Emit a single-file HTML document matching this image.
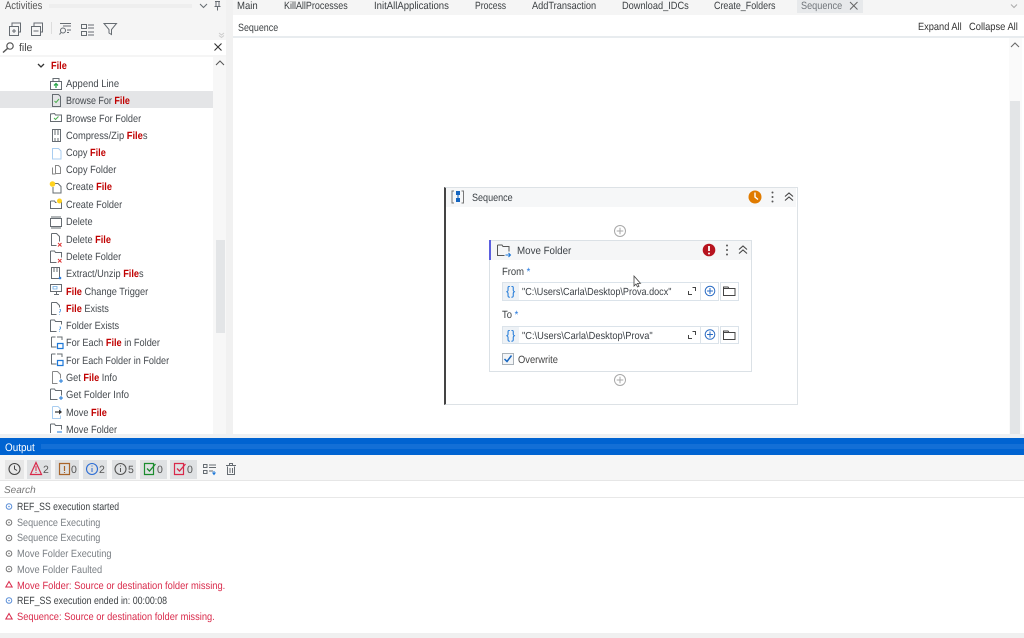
<!DOCTYPE html>
<html><head><meta charset="utf-8">
<style>
html,body{margin:0;padding:0;width:1024px;height:638px;overflow:hidden;background:#f5f5f5;font-family:"Liberation Sans",sans-serif;font-size:11px;color:#3c4043;text-rendering:geometricPrecision}
.a{position:absolute}
.t{position:absolute;white-space:nowrap;line-height:14px;height:14px;transform:scaleX(var(--x,1));transform-origin:0 0}
b.r{color:#c00000;font-weight:700}
svg{position:absolute;overflow:visible;fill:none}
.s{stroke:#666c72;stroke-width:1}
.row{position:absolute;left:66px;white-space:nowrap;line-height:14px;color:#44494e;font-size:10.5px;transform:scaleX(var(--x,.875));transform-origin:0 0}
.log{position:absolute;left:17px;white-space:nowrap;line-height:14px;font-size:10.5px;transform:scaleX(var(--x,.88));transform-origin:0 0}
.g{color:#7a7f84}.d{color:#3c4043}.e{color:#d9294a}
.btn{position:absolute;top:460px;height:19px;background:#dfe1e3}
.n{position:absolute;top:463px;font-size:10.5px;line-height:14px;color:#555}
.tab{font-size:10.5px;top:-1px}
</style></head><body>

<!-- left panel -->
<div class="a" style="left:0;top:0;width:226px;height:434px;background:#f5f5f5"></div>
<div class="t" style="left:5px;top:-1px;color:#555;--x:.86">Activities</div>
<div class="a" style="left:49px;top:4px;width:143px;height:4px;background-image:radial-gradient(#d8d8d8 0.6px,transparent 0.7px);background-size:2px 2px"></div>
<svg style="left:0;top:0" width="226" height="40"><path class="s" d="M200 4l3.500 3.500L207 4M215 1.500h5M216 1.500v5M219 1.500v5M214.500 6.500h6M217.500 6.500v4"/>
<path class="s" d="M9.500 26.500h9v9h-9zM12 26v-3h8.500v9H19M12 31h4M14 29v4"/><path class="s" d="M31.500 26.500h9v9h-9zM34 26v-3h8.500v9H41M33.500 31h5"/><path d="M51.500 22v12" stroke="#ddd"/>
<path class="s" d="M60 23.500h11M63 26h8M67 30h4M67 32.500h2"/><circle class="s" cx="63" cy="30.500" r="2.500"/><path class="s" d="M61 32.500l-1.500 2"/>
<path class="s" d="M81.500 24.500h5v4h-5zM81.500 31.500h5v4h-5zM88 25h6M88 28h6M88 32h6M88 35h6"/>
<path class="s" d="M104 23.500h12.500l-5 6v5l-2.500-1.500v-3.500z"/><path d="M219 33l2.500 2 2.500-2M219 35.500l2.500 2 2.500-2" stroke="#ccc"/></svg>
<div class="a" style="left:0;top:40px;width:226px;height:15px;background:#fff"></div>
<svg style="left:0;top:40px" width="226" height="16"><circle cx="10" cy="6" r="3.200" stroke="#555" stroke-width="1.200"/><path d="M7.500 8.500L3 12.500" stroke="#555" stroke-width="1.500"/><path d="M214.500 3.500l7 7M221.500 3.500l-7 7" stroke="#333" stroke-width="1.100"/></svg>
<div class="t" style="left:19px;top:41px;color:#444;--x:.95">file</div>
<div class="a" style="left:0;top:57px;width:213px;height:377px;background:#fff"></div>
<div class="a" style="left:213px;top:57px;width:13px;height:377px;background:#f7f7f7"></div>
<div class="a" style="left:216px;top:240px;width:9px;height:93px;background:#e3e5e7"></div>
<svg style="left:213px;top:57px" width="13" height="12"><path d="M3 8l4-4 4 4" stroke="#555"/></svg>
<svg style="left:37px;top:62px" width="8" height="8"><path d="M1 2l3 3 3-3" stroke="#333" stroke-width="1.300"/></svg>
<div class="t" style="left:51px;top:59px;font-size:10.5px;--x:.875"><b class="r">File</b></div>
<div class="a" style="left:0;top:91px;width:213px;height:17px;background:#e4e5e7"></div>

<div class="row" style="top:77px;--x:.9">Append Line</div>
<div class="row" style="top:94px;--x:.855">Browse For <b class="r">File</b></div>
<div class="row" style="top:112px;--x:.87">Browse For Folder</div>
<div class="row" style="top:129px;--x:.89">Compress/Zip <b class="r">File</b>s</div>
<div class="row" style="top:146px">Copy <b class="r">File</b></div>
<div class="row" style="top:163px;--x:.88">Copy Folder</div>
<div class="row" style="top:180px">Create <b class="r">File</b></div>
<div class="row" style="top:198px">Create Folder</div>
<div class="row" style="top:215px">Delete</div>
<div class="row" style="top:233px">Delete <b class="r">File</b></div>
<div class="row" style="top:250px">Delete Folder</div>
<div class="row" style="top:267px">Extract/Unzip <b class="r">File</b>s</div>
<div class="row" style="top:285px;--x:.88"><b class="r">File</b> Change Trigger</div>
<div class="row" style="top:302px"><b class="r">File</b> Exists</div>
<div class="row" style="top:319px">Folder Exists</div>
<div class="row" style="top:336px">For Each <b class="r">File</b> in Folder</div>
<div class="row" style="top:354px;--x:.866">For Each Folder in Folder</div>
<div class="row" style="top:371px">Get <b class="r">File</b> Info</div>
<div class="row" style="top:388px;--x:.9">Get Folder Info</div>
<div class="row" style="top:406px">Move <b class="r">File</b></div>
<div class="row" style="top:423px">Move Folder</div>

<svg style="left:0;top:0" width="226" height="436">
<path class="s" d="M50.500 81.500h11v8h-11zM53 81v-2.500h6V81"/><path d="M56 88v-4M54 85.500l2-2 2 2" stroke="#2aa84a" stroke-width="1.300"/>
<path class="s" d="M52.500 94.500h6l2 2v10h-8z"/><path d="M54.500 101l1.500 1.500 3-3.500" stroke="#4caf50"/>
<path class="s" d="M50.500 114v7.500h11V115h-6l-1-1.500z"/><path d="M54 118l1.500 1.500 3-3" stroke="#4caf50"/>
<path class="s" d="M52.500 129.500h8v12h-8zM55 130v5M58 130v5M55 138v3M58 138v3"/>
<path d="M52.500 148.500h6l2.500 2.500v8h-8.500z" stroke="#a9cdf0"/>
<path d="M55.500 165.500h3l2 2v6h-5zM52.500 167.500v6.500h3" stroke="#888"/>
<path class="s" d="M55 183.500h3l3 3v6.500h-8v-6"/><circle cx="52.500" cy="184" r="2.800" fill="#ffd21f"/>
<path class="s" d="M50.500 201v7.500h11V202h-2M50.500 201h4l1 1.500h1"/><circle cx="59.500" cy="201" r="2.500" fill="#ffd21f"/>
<path class="s" d="M50.500 218.500h11v8h-11zM51 217h10M51 228h10"/>
<path class="s" d="M51.500 233.500h5l3 3v5M51.500 233.500v12h5"/><path d="M58 243l3.500 3.500M61.500 243L58 246.500" stroke="#d33" stroke-width="1"/>
<path class="s" d="M50.500 251v11.500h6M50.500 251h4l1 1.500h6v5"/><path d="M58 259l3.500 3.500M61.500 259L58 262.500" stroke="#d33"/>
<path class="s" d="M51.500 267.500h8v11h-8zM54 268v4M57 268v4"/><circle cx="60" cy="278" r="1.300" fill="#2b7de0"/>
<path class="s" d="M50.500 284.500h11v7h-11zM54 294.500h5M56.500 291.500v3"/><path d="M53 286.500h4v2.500h-4z" stroke="#6aa8e0" stroke-width=".8"/>
<path class="s" d="M51.500 302.500h5l3 3v2M51.500 302.500v12h5"/><path d="M59.500 309.500h1v1.500l-.8 .8v1M59.500 314v.6" stroke="#3d8fe0" stroke-width=".8"/>
<path class="s" d="M50.500 320v11.500h6M50.500 320h4l1 1.500h6v3"/><path d="M59.500 327h1v1.500l-.8 .8v1M59.500 331v.6" stroke="#3d8fe0" stroke-width=".8"/>
<path class="s" d="M51.500 337v10h5M51.500 337h4M57 337h5v3"/><path d="M57.500 343.500h5.500v5h-5.500zM57.500 343.500h3" stroke="#1e78d8" stroke-width="1.200"/>
<path class="s" d="M51.500 354v10h5M51.500 354h4M57 354h5v3"/><path d="M57.500 360.500h5.500v5h-5.500z" stroke="#1e78d8" stroke-width="1.200"/>
<path d="M52.500 371.500h5l3 3v4M52.500 371.500v12h5" stroke="#888"/><path d="M59 381h4M61 379v4" stroke="#1e78d8"/>
<path class="s" d="M50.500 389v10.500h7M50.500 389h4l1 1.500h6v5"/><path d="M59 398h4M61 396v4" stroke="#1e78d8"/>
<path d="M52.500 406.500h5.500l2.500 2.500v2M52.500 406.500v12h8v-3" stroke="#a9cdf0"/><path d="M55 412h6" stroke="#333" stroke-width="1.200"/><path d="M59 409.500l3 2.500-3 2.500z" fill="#333"/>
<path class="s" d="M50.500 424v9M50.500 424h4l1 1.500h6v4"/><path d="M57 432h5" stroke="#1e78d8"/>
</svg>

<div class="a" style="left:226px;top:0;width:7px;height:434px;background:#f1f1f1"></div>

<!-- tabs -->
<div class="a" style="left:233px;top:0;width:791px;height:13px;background:#f5f5f5"></div>
<div class="a" style="left:797px;top:0;width:66px;height:13px;background:#e7e9eb"></div>
<div class="t tab" style="left:237px;--x:.91">Main</div>
<div class="t tab" style="left:284px;--x:.853">KillAllProcesses</div>
<div class="t tab" style="left:374px;--x:.91">InitAllApplications</div>
<div class="t tab" style="left:475px;--x:.82">Process</div>
<div class="t tab" style="left:532px;--x:.877">AddTransaction</div>
<div class="t tab" style="left:622px;--x:.88">Download_IDCs</div>
<div class="t tab" style="left:714px;--x:.85">Create_Folders</div>
<div class="t tab" style="left:801px;color:#70757a;--x:.87">Sequence</div>
<svg style="left:849px;top:1px" width="10" height="10"><path d="M1 1l7.500 7.500M8.500 1L1 8.500" stroke="#666"/></svg>
<svg style="left:1010px;top:3px" width="10" height="8"><path d="M1 1.500l3 3 3-3" stroke="#aaa"/></svg>
<div class="a" style="left:233px;top:15px;width:791px;height:21px;background:#fff"></div>
<div class="t" style="left:238px;top:21px;font-size:10.5px;--x:.85">Sequence</div>
<div class="t" style="left:918px;top:20px;font-size:10.5px;color:#333;--x:.88">Expand All</div>
<div class="t" style="left:969px;top:20px;font-size:10.5px;color:#333;--x:.89">Collapse All</div>
<div class="a" style="left:233px;top:36px;width:791px;height:2px;background:#e8ecef"></div>
<div class="a" style="left:233px;top:38px;width:791px;height:396px;background:#fff"></div>
<div class="a" style="left:1009px;top:38px;width:13px;height:396px;background:#fafafa"></div>
<div class="a" style="left:1010px;top:101px;width:10px;height:333px;background:#e3e5e7"></div>
<svg style="left:1010px;top:41px" width="10" height="8"><path d="M1 6l4-4 4 4" stroke="#666"/></svg>

<!-- sequence box -->
<div class="a" style="left:444px;top:187px;width:351px;height:216px;border:1px solid #dde2e6;border-left:2px solid #444;background:#fff"></div>
<div class="a" style="left:446px;top:188px;width:350px;height:19px;background:#f6f7f8"></div>
<svg style="left:450px;top:189px" width="16" height="16"><path d="M4 2H2v12h2M11.500 2h2v12h-2" stroke="#777"/><path d="M6 2h4v4H6zM6 9h4v4H6z" fill="#1565c0"/><path d="M8 6v3" stroke="#1565c0"/></svg>
<div class="t" style="left:472px;top:191px;font-size:10.5px;color:#3a3f44;--x:.86">Sequence</div>
<svg style="left:748px;top:190px" width="44" height="15"><circle cx="7" cy="7" r="6.500" fill="#e07b00"/><path d="M7 2.500V7l3 2.500" stroke="#fff" stroke-width="1.400"/><circle cx="24.500" cy="2.500" r="1" fill="#555"/><circle cx="24.500" cy="7" r="1" fill="#555"/><circle cx="24.500" cy="11.500" r="1" fill="#555"/><path d="M37 6.500l4-3.500 4 3.500M37 10.500l4-3.500 4 3.500" stroke="#444" stroke-width="1.100"/></svg>
<svg style="left:613px;top:224px" width="14" height="14"><circle cx="7" cy="7" r="5.500" stroke="#a8a8a8"/><path d="M7 3.700v6.600M3.700 7h6.600" stroke="#a8a8a8"/></svg>
<svg style="left:613px;top:373px" width="14" height="14"><circle cx="7" cy="7" r="5.500" stroke="#a8a8a8"/><path d="M7 3.700v6.600M3.700 7h6.600" stroke="#a8a8a8"/></svg>

<!-- move folder -->
<div class="a" style="left:489px;top:240px;width:261px;height:130px;border:1px solid #dbe1e6;background:#fff"></div>
<div class="a" style="left:490px;top:241px;width:261px;height:19px;background:#f5f6f7"></div>
<div class="a" style="left:489px;top:240px;width:2px;height:20px;background:#5b5fe0"></div>
<svg style="left:496px;top:243px" width="16" height="15"><path d="M1.500 2v10.500h7M1.500 2h4.500l1 1.500h6v5" stroke="#555"/><path d="M9.500 12h4.500M12.500 10l2 2-2 2" stroke="#1e78d8"/></svg>
<div class="t" style="left:517px;top:244px;font-size:10.5px;color:#3a3f44;--x:.93">Move Folder</div>
<svg style="left:702px;top:243px" width="46" height="14"><circle cx="7" cy="7" r="6.300" fill="#b7141f"/><path d="M7 3v5" stroke="#fff" stroke-width="1.800"/><circle cx="7" cy="10.500" r="1" fill="#fff"/><circle cx="25" cy="2.500" r="1" fill="#555"/><circle cx="25" cy="7" r="1" fill="#555"/><circle cx="25" cy="11.500" r="1" fill="#555"/><path d="M37 6.500l4-3.500 4 3.500M37 10.500l4-3.500 4 3.500" stroke="#444" stroke-width="1.100"/></svg>

<div class="t" style="left:502px;top:265px;font-size:10.5px;--x:.9">From <span style="color:#2b7de0">*</span></div>
<div class="t" style="left:502px;top:308px;font-size:10.5px;--x:.9">To <span style="color:#2b7de0">*</span></div>

<div class="a" style="left:502px;top:282px;width:215px;height:17px;border:1px solid #dbe3ea"></div>
<div class="a" style="left:503px;top:283px;width:16px;height:17px;background:#eef2f6"></div>
<div class="a" style="left:700px;top:282px;width:1px;height:18px;background:#dbe3ea"></div>
<div class="a" style="left:720px;top:282px;width:17px;height:17px;border:1px solid #dbe3ea"></div>
<div class="t" style="left:506px;top:284px;font-size:12.5px;color:#1e78d8;letter-spacing:1px;font-weight:400">{}</div>
<div class="t" style="left:522px;top:286px;font-size:10.3px;color:#3a3f44;--x:.88">"C:\Users\Carla\Desktop\Prova.docx"</div>

<div class="a" style="left:502px;top:326px;width:215px;height:16px;border:1px solid #dbe3ea"></div>
<div class="a" style="left:503px;top:327px;width:16px;height:16px;background:#eef2f6"></div>
<div class="a" style="left:700px;top:326px;width:1px;height:17px;background:#dbe3ea"></div>
<div class="a" style="left:720px;top:326px;width:17px;height:16px;border:1px solid #dbe3ea"></div>
<div class="t" style="left:506px;top:328px;font-size:12.5px;color:#1e78d8;letter-spacing:1px">{}</div>
<div class="t" style="left:522px;top:330px;font-size:10.3px;color:#3a3f44;--x:.9">"C:\Users\Carla\Desktop\Prova"</div>

<svg style="left:0;top:0" width="1024" height="440">
<path d="M692.500 287.500h3.500M695.500 287.500V291M688.500 291v3.500h3.500" stroke="#444"/>
<path d="M692.500 331.500h3.500M695.500 331.500V335M688.500 335v3.500h3.500" stroke="#444"/>
<circle cx="710" cy="291" r="4.800" stroke="#2b6cc4"/><path d="M710 288v6M707 291h6" stroke="#2b6cc4"/>
<circle cx="710" cy="334.500" r="4.800" stroke="#2b6cc4"/><path d="M710 331.500v6M707 334.500h6" stroke="#2b6cc4"/>
<path d="M723.500 287v8.500h11.500v-7h-6l-1-1.500z" stroke="#444"/><path d="M723.500 288.500h5" stroke="#444"/>
<path d="M723.500 331v8.500h11.500v-7h-6l-1-1.500z" stroke="#444"/><path d="M723.500 332.500h5" stroke="#444"/>
<path d="M634 276v10l2-2 1.500 3 1.500-.8-1.500-2.800h3z" fill="#fff" stroke="#444" stroke-width=".8"/>
</svg>

<div class="a" style="left:502px;top:353px;width:10px;height:10px;border:1px solid #aab2b9;background:#f3f5f7"></div>
<svg style="left:502px;top:353px" width="12" height="12"><path d="M2.500 6l2.500 2.500 4.500-6" stroke="#1565c0" stroke-width="1.500"/></svg>
<div class="t" style="left:518px;top:353px;font-size:10.5px;color:#444;--x:.89">Overwrite</div>

<!-- output -->
<div class="a" style="left:0;top:434px;width:1024px;height:4px;background:#eef0f2"></div>
<div class="a" style="left:0;top:438px;width:1024px;height:17px;background:#0063d1"></div>
<div class="a" style="left:41px;top:444px;width:983px;height:5px;background-image:radial-gradient(#4d94e6 0.6px,transparent 0.7px);background-size:2px 2px"></div>
<div class="t" style="left:5px;top:441px;color:#fff;--x:.9">Output</div>
<div class="a" style="left:0;top:455px;width:1024px;height:25px;background:#f6f6f6"></div>
<div class="a" style="left:5px;top:460px;width:19px;height:19px;background:#e7e7e7"></div>
<div class="btn" style="left:27px;width:24px"></div>
<div class="btn" style="left:55px;width:24px"></div>
<div class="btn" style="left:83px;width:24px"></div>
<div class="btn" style="left:112px;width:24px"></div>
<div class="btn" style="left:140px;width:27px"></div>
<div class="btn" style="left:170px;width:27px"></div>
<div class="n" style="left:43px">2</div>
<div class="n" style="left:71px">0</div>
<div class="n" style="left:99px">2</div>
<div class="n" style="left:128px">5</div>
<div class="n" style="left:157px">0</div>
<div class="n" style="left:187px">0</div>
<svg style="left:0;top:455px" width="240" height="25">
<circle cx="14.500" cy="14" r="5.500" stroke="#444" stroke-width="1.100"/><path d="M14.500 10.500V14l2.500 1.500" stroke="#444"/>
<path d="M36 7.500l5.500 12h-11z" stroke="#d9294a" stroke-width="1.200"/><path d="M36 11v5M36 17v1" stroke="#d9294a"/>
<path d="M59.500 8.500h10v11h-10z" stroke="#a8642a" stroke-width="1.200"/><path d="M64.500 11v5M64.500 17v1" stroke="#a8642a" stroke-width="1.200"/>
<circle cx="92" cy="14" r="5.500" stroke="#2b6cd4" stroke-width="1.100"/><path d="M92 10.500v1M92 13v4" stroke="#2b6cd4"/>
<circle cx="120.500" cy="14" r="5.500" stroke="#555" stroke-width="1.100"/><path d="M120.500 10.500v1M120.500 13v4" stroke="#555"/>
<path d="M144.500 8.500h9v11h-9z" stroke="#1c8c2e" stroke-width="1.200"/><path d="M147 13.500l2.500 2.500 6-7" stroke="#1c8c2e" stroke-width="1.300"/>
<path d="M174.500 8.500h9v11h-9z" stroke="#d9294a" stroke-width="1.200"/><path d="M177 13.500l2.500 2.500 6-7" stroke="#d9294a" stroke-width="1.300"/>
<path class="s" d="M203.500 9.500h3.500v3h-3.500zM203.500 15.500h3.500v3h-3.500zM209 10h7M209 12.500h7M209 16h4"/><path d="M214 16v3M212.500 17.500l1.500 2 1.500-2" stroke="#1e78d8"/>
<path class="s" d="M227.500 11.500v8h7v-8M226 10.500h10M229.500 10V8.500h3V10M230 13v5M232.500 13v5"/>
</svg>
<div class="a" style="left:0;top:480px;width:1024px;height:18px;background:#fff;border-top:1px solid #e6e6e6;border-bottom:1px solid #e8e8e8;box-sizing:border-box"></div>
<div class="t" style="left:4px;top:484px;font-size:10px;font-style:italic;color:#777">Search</div>
<div class="a" style="left:0;top:498px;width:1024px;height:135px;background:#fff"></div>
<div class="a" style="left:0;top:633px;width:1024px;height:5px;background:#f0f0f0"></div>

<div class="log d" style="top:500px;--x:.825">REF_SS execution started</div>
<div class="log g" style="top:516px;--x:.865">Sequence Executing</div>
<div class="log g" style="top:531px;--x:.865">Sequence Executing</div>
<div class="log g" style="top:547px">Move Folder Executing</div>
<div class="log g" style="top:563px;--x:.885">Move Folder Faulted</div>
<div class="log e" style="top:579px;--x:.89">Move Folder: Source or destination folder missing.</div>
<div class="log d" style="top:594px;--x:.84">REF_SS execution ended in: 00:00:08</div>
<div class="log e" style="top:610px;--x:.887">Sequence: Source or destination folder missing.</div>
<svg style="left:0;top:498px" width="16" height="130">
<g stroke="#5b8fd8"><circle cx="9" cy="8.500" r="2.800"/><circle cx="9" cy="102.500" r="2.800"/></g><g fill="#5b8fd8"><circle cx="9" cy="8.500" r=".8"/><circle cx="9" cy="102.500" r=".8"/></g>
<g stroke="#777"><circle cx="9" cy="24.500" r="2.800"/><circle cx="9" cy="40" r="2.800"/><circle cx="9" cy="55.500" r="2.800"/><circle cx="9" cy="71" r="2.800"/></g>
<g fill="#777"><circle cx="9" cy="24.500" r=".8"/><circle cx="9" cy="40" r=".8"/><circle cx="9" cy="55.500" r=".8"/><circle cx="9" cy="71" r=".8"/></g>
<path d="M9 83.500l3.200 5.500H5.800zM9 115.500l3.200 5.500H5.800z" stroke="#d9294a"/>
</svg>
</body></html>
